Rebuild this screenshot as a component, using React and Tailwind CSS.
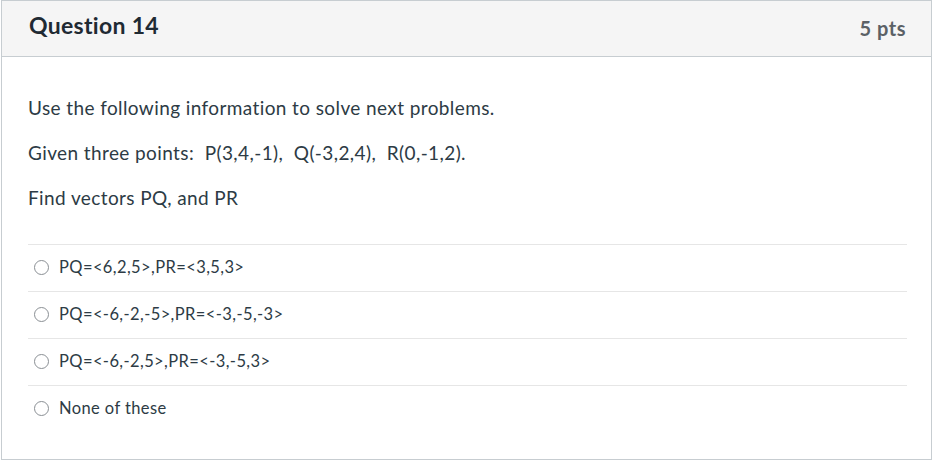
import React from "react";

const answers = [
  "PQ=<6,2,5>,PR=<3,5,3>",
  "PQ=<-6,-2,-5>,PR=<-3,-5,-3>",
  "PQ=<-6,-2,5>,PR=<-3,-5,3>",
  "None of these",
];

export default function App() {
  return (
    <div className="w-[933px] h-[463px] bg-white" style={{ fontFamily: "Lato, 'Noto Sans', sans-serif" }}>
      <div className="ml-[1px] w-[931px] h-[460px] border border-[#c7cdd1] flex flex-col">
        <div className="h-[56px] shrink-0 bg-[#f5f5f5] border-b border-[#c7cdd1] flex items-center justify-between pl-[27px] pr-[25px]">
          <div className="text-[23px] tracking-[0.3px] font-bold text-[#1f2a33] leading-none -mt-[6px]">Question 14</div>
          <div className="text-[20px] tracking-[0.5px] font-bold text-[#5b6166] leading-none -mt-[2px]">5 pts</div>
        </div>
        <div className="pl-[26px] pr-[24px] pt-[39px] text-[#2d3b45]">
          <p className="text-[19px] tracking-[0.4px] leading-[24px]">Use the following information to solve next problems.</p>
          <p className="text-[19px] tracking-[0.4px] leading-[24px] mt-[21px]">Given three points:&nbsp; P(3,4,-1),&nbsp; Q(-3,2,4),&nbsp; R(0,-1,2).</p>
          <p className="text-[19px] tracking-[0.4px] leading-[24px] mt-[21px]">Find vectors PQ, and PR</p>
          <div className="mt-[34px]">
            {answers.map((a) => (
              <div key={a} className="border-t border-[#e6e6e6] h-[47px] flex items-center pl-[6px]">
                <span className="w-[15px] h-[15px] rounded-full border border-[#8a8f94] bg-white shrink-0 -mt-[1px]" />
                <span className="ml-[10px] text-[16.5px] tracking-[0.4px] leading-none text-[#2d3b45] -mt-[2px]">{a}</span>
              </div>
            ))}
          </div>
        </div>
      </div>
    </div>
  );
}
